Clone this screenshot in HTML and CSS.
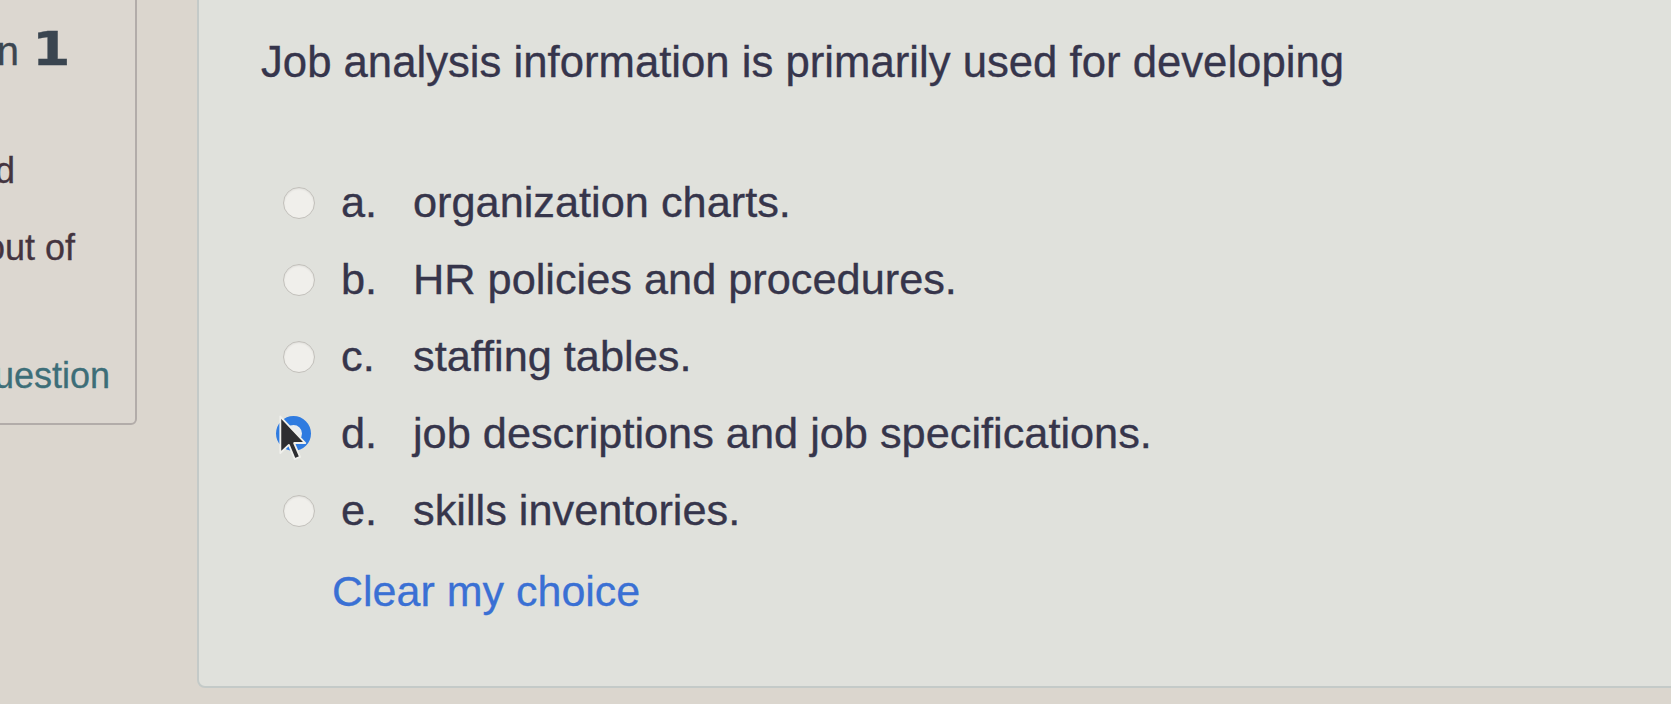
FILE: index.html
```html
<!DOCTYPE html>
<html lang="en">
<head>
<meta charset="utf-8">
<title>Question 1</title>
<link rel="stylesheet" href="styles.css">
</head>
<body>
<div class="page">
  <aside class="info">
    <h3 class="qtitle">Question <span class="qno">1</span></h3>
    <div class="state">Answered</div>
    <div class="grade">Marked out of 1.00</div>
    <a class="flag" href="#"><svg class="flag-icon" viewBox="0 0 24 24" width="30" height="30"><path d="M5 3v18M5 4h12l-3 4 3 4H5" fill="none" stroke="#3d6e78" stroke-width="2"/></svg>Flag question</a>
  </aside>
  <main class="formulation">
    <div class="qtext">Job analysis information is primarily used for developing</div>
    <div class="answers">
      <div class="option"><span class="radio"></span><span class="num">a.</span><span class="label">organization charts.</span></div>
      <div class="option"><span class="radio"></span><span class="num">b.</span><span class="label">HR policies and procedures.</span></div>
      <div class="option"><span class="radio"></span><span class="num">c.</span><span class="label">staffing tables.</span></div>
      <div class="option selected"><span class="radio checked"></span><span class="num">d.</span><span class="label">job descriptions and job specifications.</span>
        <svg class="cursor" viewBox="0 0 20 32" width="31" height="50"><path d="M1.5 1.5 L1.5 25 L7 19.8 L10.8 29 L14.2 27.6 L10.4 18.6 L17.6 18.6 Z" fill="#2e2e31" stroke="#f0f0ec" stroke-width="1.2" stroke-linejoin="round"/></svg>
      </div>
      <div class="option"><span class="radio"></span><span class="num">e.</span><span class="label">skills inventories.</span></div>
    </div>
    <a class="clear" href="#">Clear my choice</a>
  </main>
</div>
</body>
</html>
```
FILE: styles.css
```css
html, body {
  margin: 0;
  padding: 0;
}
body {
  background: #dbd6ce;
  font-family: "Liberation Sans", Arial, sans-serif;
  color: #36354b;
  overflow: hidden;
  width: 1671px;
  height: 704px;
}
.page {
  display: flex;
  align-items: flex-start;
}
.info {
  box-sizing: border-box;
  flex: 0 0 auto;
  width: 297px;
  height: 445px;
  margin-left: -160px;
  margin-top: -20px;
  padding: 39px 0 0 13px;
  background: #dcd7d0;
  border: 2px solid #b2aca9;
  border-radius: 6px;
  font-size: 36px;
  line-height: 40px;
  color: #44343f;
  -webkit-text-stroke: 0.3px currentColor;
}
.qtitle {
  margin: 0;
  padding-left: 4px;
  font-size: 40px;
  font-weight: normal;
  line-height: 56px;
  color: #3c4650;
}
.qno {
  display: inline-block;
  font-family: "DejaVu Sans", sans-serif;
  font-size: 47px;
  font-weight: bold;
  margin-left: 2px;
  color: #3a4550;
  transform: scaleX(1.18);
  transform-origin: left center;
}
.state {
  margin-top: 72px;
}
.grade {
  margin-top: 37px;
}
.flag {
  display: flex;
  align-items: center;
  gap: 9px;
  margin-top: 48px;
  color: #3d6e78;
  text-decoration: none;
}
.flag-icon {
  flex: 0 0 auto;
}
.formulation {
  box-sizing: border-box;
  flex: 1 0 auto;
  height: 708px;
  margin-left: 60px;
  margin-top: -20px;
  margin-right: -40px;
  padding: 54px 0 0 62px;
  background: #e0e1dc;
  border: 2px solid #c4cac8;
  border-radius: 8px;
}
.qtext {
  font-size: 43.7px;
  line-height: 52px;
  color: #36354c;
  -webkit-text-stroke: 0.35px currentColor;
}
.answers {
  margin-top: 76px;
  margin-left: 19px;
}
.option {
  position: relative;
  display: flex;
  align-items: center;
  height: 77px;
  font-size: 43.3px;
  line-height: 77px;
  color: #36354b;
  -webkit-text-stroke: 0.35px currentColor;
}
.radio {
  box-sizing: border-box;
  flex: 0 0 auto;
  width: 32px;
  height: 32px;
  border-radius: 50%;
  background: #f0efeb;
  border: 1px solid #c2c0bb;
  box-shadow: inset 0 1px 2px rgba(0,0,0,0.08);
  margin-left: 3px;
  margin-right: 26px;
}
.radio.checked {
  width: 35px;
  height: 35px;
  margin-left: -4px;
  margin-right: 30px;
  background: #e9ecef;
  border: 9px solid #2f7be0;
  box-shadow: none;
}
.num {
  flex: 0 0 auto;
  width: 72px;
}
.label {
  white-space: nowrap;
}
.cursor {
  position: absolute;
  left: -2px;
  top: 19px;
}
.clear {
  display: block;
  margin-top: 4px;
  margin-left: 71px;
  font-size: 43px;
  line-height: 77px;
  color: #3a70d4;
  text-decoration: none;
  -webkit-text-stroke: 0.3px currentColor;
}
```
